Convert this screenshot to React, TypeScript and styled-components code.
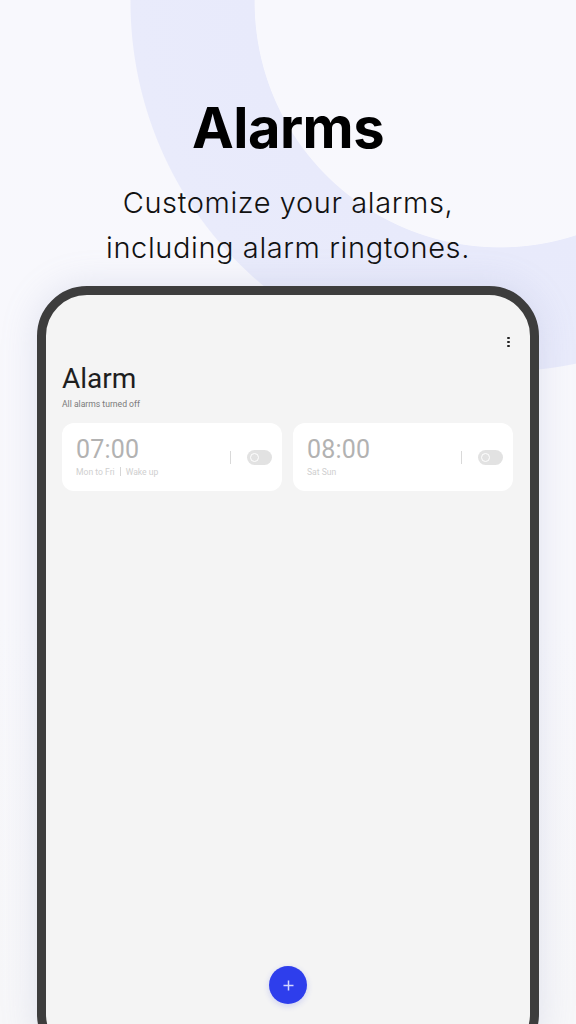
import React from "react";
import styled, { createGlobalStyle } from "styled-components";

const Global = createGlobalStyle`
  html, body {
    margin: 0;
    padding: 0;
    height: 1024px;
    overflow: hidden;
  }
  body {
    font-family: "Inter", "Noto Sans", sans-serif;
  }
`;

const Page = styled.div`
  width: 576px;
  height: 1024px;
  overflow: hidden;
  display: flex;
  flex-direction: column;
  align-items: center;
  background:
    radial-gradient(
      circle at 500px 2px,
      transparent 245px,
      #e8eafb 245.8px,
      #e9ebfb 369px,
      transparent 370px
    ),
    linear-gradient(180deg, #f8f8fd 0%, #f8f8fc 60%, #f7f7f9 100%);
`;

const Headline = styled.h1`
  margin: 96px 0 0;
  font-family: "Inter", "Noto Sans", sans-serif;
  font-weight: 700;
  font-size: 56px;
  line-height: 64px;
  color: #000;
  letter-spacing: -0.5px;
`;

const Lead = styled.p`
  margin: 20px 0 0;
  font-family: "Inter", "Noto Sans", sans-serif;
  font-weight: 300;
  font-size: 29px;
  line-height: 45px;
  color: #111;
  text-align: center;
  letter-spacing: 0.6px;
`;

const PhoneFrame = styled.div`
  margin-top: 16px;
  width: 484px;
  border: 9px solid #3d3d3d;
  border-radius: 50px;
  background: #f4f4f4;
  box-shadow: 0 0 36px rgba(140, 150, 190, 0.22);
  flex-shrink: 0;
`;

const Screen = styled.div`
  height: 760px;
  display: flex;
  flex-direction: column;
  padding: 37px 17px 51px 16px;
  box-sizing: border-box;
  font-family: "Roboto", "Liberation Sans", sans-serif;
`;

const TopBar = styled.div`
  height: 20px;
  display: flex;
  justify-content: flex-end;
  align-items: center;
  padding-right: 3px;
`;

const MenuDots = styled.div`
  display: flex;
  flex-direction: column;
  gap: 1.6px;
  span {
    width: 2.6px;
    height: 2.6px;
    border-radius: 50%;
    background: #222;
  }
`;

const Title = styled.h2`
  margin: 9.5px 0 0;
  font-weight: 400;
  font-size: 28px;
  line-height: 33.6px;
  color: #1e1e1e;
`;

const Status = styled.div`
  margin-top: 2.5px;
  font-size: 8.6px;
  line-height: 12px;
  color: #7a7a7a;
`;

const CardGrid = styled.div`
  margin-top: 13.5px;
  display: grid;
  grid-template-columns: 1fr 1fr;
  gap: 11px;
`;

const Card = styled.div`
  background: #fff;
  border-radius: 12px;
  height: 68px;
  box-sizing: border-box;
  padding: 12px 10px 0 14px;
  display: flex;
  align-items: flex-start;
`;

const TimeBlock = styled.div`
  flex: 1;
  display: flex;
  flex-direction: column;
`;

const Time = styled.div`
  font-size: 25px;
  line-height: 30px;
  color: #b2b2b2;
  letter-spacing: 0.2px;
`;

const Repeat = styled.div`
  margin-top: 0.7px;
  font-size: 8.6px;
  line-height: 12px;
  color: #cfcfcf;
  display: flex;
  align-items: center;
  gap: 5px;
`;

const Bar = styled.span`
  width: 1px;
  height: 9px;
  background: #d6d6d6;
`;

const Controls = styled.div`
  align-self: center;
  display: flex;
  align-items: center;
  gap: 16px;
  margin-top: -11px;
`;

const Divider = styled.span`
  width: 1px;
  height: 13px;
  background: #d9d9d9;
`;

const Toggle = styled.span`
  width: 25px;
  height: 15px;
  border-radius: 8px;
  background: #e2e2e2;
  display: flex;
  align-items: center;
  padding-left: 3px;
  box-sizing: border-box;
`;

const Knob = styled.span`
  width: 9px;
  height: 9px;
  border-radius: 50%;
  border: 1.8px solid #ffffff;
  box-sizing: border-box;
`;

const Spacer = styled.div`
  flex: 1;
`;

const Fab = styled.button`
  align-self: center;
  width: 38px;
  height: 38px;
  border-radius: 50%;
  border: none;
  background: #2e3eec;
  box-shadow: 0 2px 6px rgba(46, 62, 236, 0.2);
  display: flex;
  align-items: center;
  justify-content: center;
  padding: 0;
  margin-left: 1px;
`;

type Alarm = { time: string; repeat: string[] };

const alarms: Alarm[] = [
  { time: "07:00", repeat: ["Mon to Fri", "Wake up"] },
  { time: "08:00", repeat: ["Sat Sun"] },
];

export default function App() {
  return (
    <>
      <Global />
      <Page>
        <Headline>Alarms</Headline>
        <Lead>
          Customize your alarms,
          <br />
          including alarm ringtones.
        </Lead>
        <PhoneFrame>
          <Screen>
            <TopBar>
              <MenuDots>
                <span />
                <span />
                <span />
              </MenuDots>
            </TopBar>
            <Title>Alarm</Title>
            <Status>All alarms turned off</Status>
            <CardGrid>
              {alarms.map((a) => (
                <Card key={a.time}>
                  <TimeBlock>
                    <Time>{a.time}</Time>
                    <Repeat>
                      {a.repeat.map((r, i) => (
                        <React.Fragment key={r}>
                          {i > 0 && <Bar />}
                          <span>{r}</span>
                        </React.Fragment>
                      ))}
                    </Repeat>
                  </TimeBlock>
                  <Controls>
                    <Divider />
                    <Toggle>
                      <Knob />
                    </Toggle>
                  </Controls>
                </Card>
              ))}
            </CardGrid>
            <Spacer />
            <Fab aria-label="Add alarm">
              <svg width="11" height="11" viewBox="0 0 11 11">
                <path
                  d="M5.5 0.5v10M0.5 5.5h10"
                  stroke="#d4d7ff"
                  strokeWidth="1.5"
                  fill="none"
                />
              </svg>
            </Fab>
          </Screen>
        </PhoneFrame>
      </Page>
    </>
  );
}
